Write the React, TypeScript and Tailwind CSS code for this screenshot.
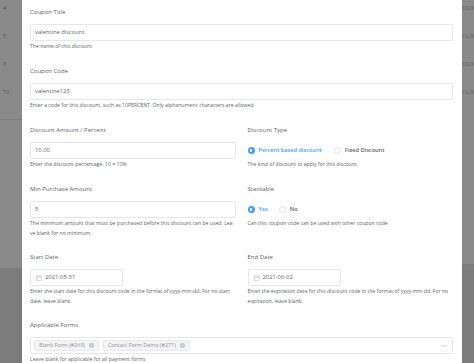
import React from "react";

const font = { fontFamily: '"Open Sans", "Liberation Sans", sans-serif' };

function Label({ children }: { children: React.ReactNode }) {
  return <div className="h-[10px] text-[6px] leading-[10px] text-[#606266]">{children}</div>;
}

function Help({ children }: { children: React.ReactNode }) {
  return <div className="whitespace-nowrap text-[5.15px] leading-[10px] text-[#606266]">{children}</div>;
}

function TextInput({ value }: { value: string }) {
  return (
    <div className="mt-[7px] flex h-[17px] items-center rounded-[2px] border border-[#e4e7ed] bg-white px-[4px] text-[5.8px] text-[#606266]">
      {value}
    </div>
  );
}

function DateInput({ value }: { value: string }) {
  return (
    <div className="mt-[7px] flex h-[17px] w-[93px] items-center gap-[3px] rounded-[2px] border border-[#e4e7ed] bg-white px-[5px] text-[5.8px] text-[#606266]">
      <svg width="6" height="6" viewBox="0 0 12 12" fill="none" stroke="#c0c4cc" strokeWidth="1.2">
        <rect x="1" y="2" width="10" height="9" />
        <line x1="1" y1="5" x2="11" y2="5" />
        <line x1="4" y1="1" x2="4" y2="3" />
        <line x1="8" y1="1" x2="8" y2="3" />
      </svg>
      {value}
    </div>
  );
}

function Radio({ label, checked }: { label: string; checked?: boolean }) {
  return (
    <div className="flex items-center gap-[4px]">
      {checked ? (
        <span className="flex h-[7px] w-[7px] items-center justify-center rounded-full bg-[#409eff]">
          <span className="h-[2.5px] w-[2.5px] rounded-full bg-white" />
        </span>
      ) : (
        <span className="h-[7px] w-[7px] rounded-full border border-[#dcdfe6] bg-white" />
      )}
      <span className={`text-[5.6px] font-semibold ${checked ? "text-[#409eff]" : "text-[#606266]"}`}>{label}</span>
    </div>
  );
}

function Tag({ label }: { label: string }) {
  return (
    <span className="flex h-[11px] items-center gap-[4px] rounded-[2px] border border-[#e9e9eb] bg-[#f4f4f5] px-[4px] text-[5.4px] whitespace-nowrap text-[#909399]">
      {label}
      <span className="flex h-[5px] w-[5px] items-center justify-center rounded-full bg-[#c0c4cc] text-[4px] leading-none text-white">
        ×
      </span>
    </span>
  );
}

export default function App() {
  const rows = ["4", "5", "9", "10"];
  return (
    <div className="flex h-[363px] w-[474px] overflow-hidden bg-white" style={font}>
      <div className="flex w-[22px] flex-col bg-[#8a8a8a]">
        <div className="h-[120px] border-b border-[#7e7e7e]">
          {rows.map((r) => (
            <div key={r} className="flex h-[28px] items-start pl-[3px] pt-[4px] text-[5.5px] text-[#5a5a5a]">
              {r}
            </div>
          ))}
        </div>
        <div className="h-[149px] border-b border-[#7a7a7a]" />
        <div className="flex-1 bg-[#7c7c7c]" />
      </div>

      <div className="flex-1 px-[8px] pr-[9px]">
        <div className="pt-[7px]">
          <Label>Coupon Title</Label>
          <TextInput value="valentine discount" />
          <Help>The name of this discount</Help>
        </div>

        <div className="mt-[15px]">
          <Label>Coupon Code</Label>
          <TextInput value="valentine123" />
          <Help>Enter a code for this discount, such as 10PERCENT. Only alphanumeric characters are allowed.</Help>
        </div>

        <div className="mt-[15px] grid grid-cols-2 gap-x-[12px]">
          <div>
            <Label>Discount Amount / Percent</Label>
            <TextInput value="10.00" />
            <Help>Enter the discount percentage. 10 = 10%</Help>
          </div>
          <div>
            <Label>Discount Type</Label>
            <div className="mt-[7px] flex h-[17px] items-center gap-[12px]">
              <Radio label="Percent based discount" checked />
              <Radio label="Fixed Discount" />
            </div>
            <Help>The kind of discount to apply for this discount.</Help>
          </div>
        </div>

        <div className="mt-[15px] grid grid-cols-2 gap-x-[12px]">
          <div>
            <Label>Min Purchase Amount</Label>
            <TextInput value="5" />
            <Help>
              The minimum amount that must be purchased before this discount can be used. Lea
              <br />
              ve blank for no minimum.
            </Help>
          </div>
          <div>
            <Label>Stackable</Label>
            <div className="mt-[7px] flex h-[17px] items-center gap-[11px]">
              <Radio label="Yes" checked />
              <Radio label="No" />
            </div>
            <Help>Can this coupon code can be used with other coupon code</Help>
          </div>
        </div>

        <div className="mt-[14px] grid grid-cols-2 gap-x-[12px]">
          <div>
            <Label>Start Date</Label>
            <DateInput value="2021-05-31" />
            <Help>
              Enter the start date for this discount code in the format of yyyy-mm-dd. For no start
              <br />
              date, leave blank.
            </Help>
          </div>
          <div>
            <Label>End Date</Label>
            <DateInput value="2021-06-02" />
            <Help>
              Enter the expiration date for this discount code in the format of yyyy-mm-dd. For no
              <br />
              expiration, leave blank.
            </Help>
          </div>
        </div>

        <div className="mt-[14px]">
          <Label>Applicable Forms</Label>
          <div className="mt-[7px] flex h-[17px] items-center justify-between rounded-[2px] border border-[#e4e7ed] bg-white pl-[3px] pr-[6px]">
            <div className="flex items-center gap-[4px]">
              <Tag label="Blank Form (#263)" />
              <Tag label="Contact Form Demo (#271)" />
            </div>
            <svg width="6" height="6" viewBox="0 0 12 12" fill="none" stroke="#c0c4cc" strokeWidth="1.4">
              <polyline points="2,4 6,8 10,4" />
            </svg>
          </div>
          <Help>Leave blank for applicable for all payment forms</Help>
        </div>
      </div>

      <div className="flex w-[12px] flex-col overflow-hidden bg-[#8a8a8a]">
        <div className="h-[265px] border-b border-[#7a7a7a]">
          {rows.map((r) => (
            <div key={r} className="flex h-[28px] items-start whitespace-nowrap pt-[4px] text-[5.5px] text-[#5a5a5a]">
              10,00
            </div>
          ))}
        </div>
        <div className="flex-1 bg-[#7c7c7c]" />
      </div>
    </div>
  );
}
